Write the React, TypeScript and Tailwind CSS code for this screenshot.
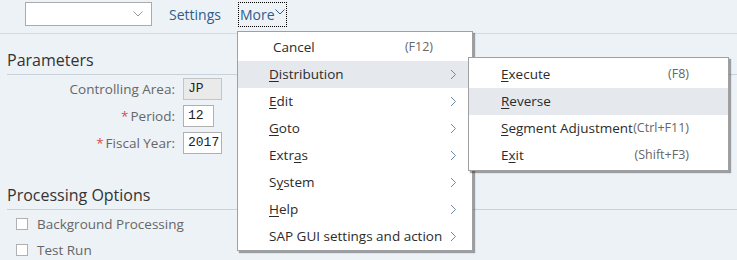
import React from "react";

const font = { fontFamily: "'Open Sans', 'Noto Sans', sans-serif" };

type Item = { label: string; u: number; shortcut?: string; sub?: boolean; active?: boolean; indent?: boolean };

const mainItems: Item[] = [
  { label: "Cancel", u: -1, shortcut: "(F12)", indent: true },
  { label: "Distribution", u: 0, sub: true, active: true },
  { label: "Edit", u: 0, sub: true },
  { label: "Goto", u: 0, sub: true },
  { label: "Extras", u: 4, sub: true },
  { label: "System", u: 1, sub: true },
  { label: "Help", u: 0, sub: true },
  { label: "SAP GUI settings and actions", u: -1, sub: true },
];

const subItems: Item[] = [
  { label: "Execute", u: 0, shortcut: "(F8)" },
  { label: "Reverse", u: 0, active: true },
  { label: "Segment Adjustment", u: 0, shortcut: "(Ctrl+F11)" },
  { label: "Exit", u: 1, shortcut: "(Shift+F3)" },
];

function Label({ text, u }: { text: string; u: number }) {
  if (u < 0) return <span>{text}</span>;
  return (
    <span>
      {text.slice(0, u)}
      <span className="underline underline-offset-2">{text[u]}</span>
      {text.slice(u + 1)}
    </span>
  );
}

function Chevron() {
  return (
    <svg width="7" height="11" viewBox="0 0 7 11" className="shrink-0">
      <path d="M1 1l4.5 4.5L1 10" fill="none" stroke="#6f86a6" strokeWidth="1" />
    </svg>
  );
}

function MenuRow({ it, pl }: { it: Item; pl: string }) {
  return (
    <div className={`flex h-[27px] items-center ${it.active ? "bg-[#e5e8ec]" : ""}`}>
      <div className={`${pl} min-w-0 flex-1 overflow-hidden whitespace-nowrap text-[13.5px] text-[#2b2b2b]`}>
        <Label text={it.label} u={it.u} />
      </div>
      {it.shortcut && <div className="shrink-0 pr-[39px] text-[12.5px] text-[#666]">{it.shortcut}</div>}
      {it.sub && (
        <div className="flex w-[30px] shrink-0 items-center pl-[8px]">
          <Chevron />
        </div>
      )}
    </div>
  );
}

function FieldRow({ label, value, w, req, disabled }: { label: string; value: string; w: string; req?: boolean; disabled?: boolean }) {
  return (
    <div className="flex h-[22px] items-center">
      <div className="w-[168px] text-right text-[13.5px] text-[#666]">
        {req && <span className="mr-[2px] text-[#d04f4f]">*</span>}
        {label}
      </div>
      <div
        className={`ml-[8px] flex h-[22px] ${w} items-center border pl-[4px] text-[13px] text-[#222] ${
          disabled ? "border-[#c5c5c5] bg-[#eaeaea]" : "border-[#b0b0b0] bg-white"
        }`}
        style={{ fontFamily: "'Liberation Mono', monospace" }}
      >
        {value}
      </div>
    </div>
  );
}

function Check({ label }: { label: string }) {
  return (
    <div className="flex h-[12px] items-center gap-[9px]">
      <div className="h-[12px] w-[12px] border border-[#b0b0b0] bg-white" />
      <span className="text-[13.5px] text-[#666]">{label}</span>
    </div>
  );
}

export default function App() {
  return (
    <div className="relative h-[260px] w-[737px] overflow-hidden bg-[#edf2f7]" style={font}>
      {/* toolbar */}
      <div className="flex h-[34px] items-start border-b border-[#d3dce6] pt-[2px]">
        <div className="ml-[25px] flex h-[24px] w-[127px] items-center justify-end border border-[#ababab] bg-white pr-[8px]">
          <svg width="10" height="6" viewBox="0 0 10 6">
            <path d="M0.5 0.5L5 5l4.5-4.5" fill="none" stroke="#999" strokeWidth="1" />
          </svg>
        </div>
        <div className="ml-[17px] mt-[2px] text-[14px] text-[#2f5d8a]">Settings</div>
        <div className="ml-[17px] flex h-[25px] items-center border border-dotted border-black px-[1px] text-[14px] text-[#2f5d8a]">
          More
          <svg width="10" height="6" viewBox="0 0 10 6" className="mb-[6px]">
            <path d="M0.5 0.5L5 5l4.5-4.5" fill="none" stroke="#2f5d8a" strokeWidth="1" />
          </svg>
        </div>
      </div>

      {/* parameters */}
      <div className="pl-[7px]">
        <div className="mt-[14px] border-b border-[#c9d1da] pb-[2px] text-[16px] text-[#333]">Parameters</div>
        <div className="mt-[3px] flex flex-col gap-[5px]">
          <FieldRow label="Controlling Area:" value="JP" w="w-[39px]" disabled />
          <FieldRow label="Period:" value="12" w="w-[31px]" req />
          <FieldRow label="Fiscal Year:" value="2017" w="w-[39px]" req />
        </div>
        <div className="mt-[29px] border-b border-[#c9d1da] pb-[2px] text-[16px] text-[#333]">Processing Options</div>
        <div className="mt-[8px] flex flex-col gap-[14px] pl-[9px]">
          <Check label="Background Processing" />
          <Check label="Test Run" />
        </div>
      </div>

      {/* main menu */}
      <div className="absolute left-[237px] top-[31px] w-[236px] border border-[#a0a0a0] bg-white pt-[2px] shadow-[2px_2px_1px_rgba(0,0,0,0.35)]">
        {mainItems.map((it) => (
          <MenuRow key={it.label} it={it} pl={it.indent ? "pl-[35px]" : "pl-[31px]"} />
        ))}
      </div>

      {/* sub menu */}
      <div className="absolute left-[468px] top-[57px] w-[261px] border border-[#a0a0a0] bg-white pb-[1px] pt-[3px] shadow-[2px_2px_1px_rgba(0,0,0,0.35)]">
        {subItems.map((it) => (
          <MenuRow key={it.label} it={it} pl="pl-[32px]" />
        ))}
      </div>
    </div>
  );
}
